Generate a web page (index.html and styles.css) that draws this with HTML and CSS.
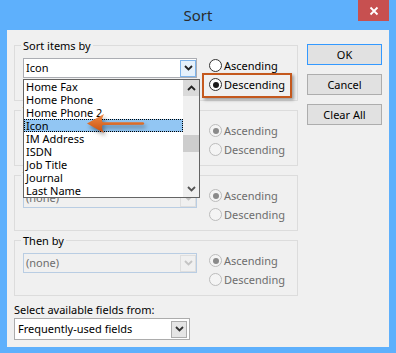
FILE: index.html
```html
<!DOCTYPE html>
<html lang="en">
<head>
  <meta charset="UTF-8" />
  <title>Sort</title>
  <link rel="stylesheet" href="styles.css">
</head>
<body>
  <div class="window">
    <!-- Title bar -->
    <header class="titlebar">
      <span></span>
      <span class="title">Sort</span>
      <button class="close" aria-label="Close">
        <svg width="10" height="10" viewBox="0 0 10 10"><path d="M1.5 1.5 L8.5 8.5 M8.5 1.5 L1.5 8.5" stroke="#fff" stroke-width="1.8" fill="none"/></svg>
      </button>
    </header>

    <div class="client">
      <div class="fields">
        <fieldset class="group">
          <legend>Sort items by</legend>
          <div class="combo active">
            <span>Icon</span>
            <span class="combo-btn"><svg width="9" height="6" viewBox="0 0 9 6"><path d="M1 1 L4.5 4.5 L8 1" stroke="#222" stroke-width="1.8" fill="none"/></svg></span>
          </div>
          <div class="order">
            <label class="radio"><span class="dot"></span>Ascending</label>
            <label class="radio checked marked"><span class="dot"></span>Descending</label>
          </div>
        </fieldset>

        <fieldset class="group off">
          <legend>Then by</legend>
          <div class="combo disabled">
            <span>(none)</span>
            <span class="combo-btn"><svg width="9" height="6" viewBox="0 0 9 6"><path d="M1 1 L4.5 4.5 L8 1" stroke="#c4c4c4" stroke-width="1.8" fill="none"/></svg></span>
          </div>
          <div class="order">
            <label class="radio checked"><span class="dot"></span>Ascending</label>
            <label class="radio"><span class="dot"></span>Descending</label>
          </div>
        </fieldset>

        <fieldset class="group off">
          <legend>Then by</legend>
          <div class="combo disabled">
            <span>(none)</span>
            <span class="combo-btn"><svg width="9" height="6" viewBox="0 0 9 6"><path d="M1 1 L4.5 4.5 L8 1" stroke="#c4c4c4" stroke-width="1.8" fill="none"/></svg></span>
          </div>
          <div class="order">
            <label class="radio checked"><span class="dot"></span>Ascending</label>
            <label class="radio"><span class="dot"></span>Descending</label>
          </div>
        </fieldset>

        <fieldset class="group off">
          <legend>Then by</legend>
          <div class="combo disabled">
            <span>(none)</span>
            <span class="combo-btn"><svg width="9" height="6" viewBox="0 0 9 6"><path d="M1 1 L4.5 4.5 L8 1" stroke="#c4c4c4" stroke-width="1.8" fill="none"/></svg></span>
          </div>
          <div class="order">
            <label class="radio checked"><span class="dot"></span>Ascending</label>
            <label class="radio"><span class="dot"></span>Descending</label>
          </div>
        </fieldset>

        <div class="source-label">Select available fields from:</div>
        <div class="combo source">
          <span>Frequently-used fields</span>
          <span class="combo-btn"><svg width="9" height="6" viewBox="0 0 9 6"><path d="M1 1 L4.5 4.5 L8 1" stroke="#333" stroke-width="1.8" fill="none"/></svg></span>
        </div>

        <!-- open dropdown of the first combo -->
        <div class="dropdown">
          <ul class="options">
            <li>Home Fax</li>
            <li>Home Phone</li>
            <li>Home Phone 2</li>
            <li class="selected">Icon</li>
            <li>IM Address</li>
            <li>ISDN</li>
            <li>Job Title</li>
            <li>Journal</li>
            <li>Last Name</li>
          </ul>
          <div class="scrollbar">
            <span class="scroll-btn hover"><svg width="9" height="6" viewBox="0 0 9 6"><path d="M1 5 L4.5 1.5 L8 5" stroke="#222" stroke-width="1.8" fill="none"/></svg></span>
            <span class="thumb"></span>
            <span class="scroll-btn"><svg width="9" height="6" viewBox="0 0 9 6"><path d="M1 1 L4.5 4.5 L8 1" stroke="#555" stroke-width="1.8" fill="none"/></svg></span>
          </div>
        </div>

        <svg class="pointer" width="62" height="26" viewBox="0 0 62 26">
          <defs>
            <linearGradient id="orange" x1="0" y1="0" x2="0" y2="1">
              <stop offset="0" stop-color="#f08a45"/>
              <stop offset="1" stop-color="#c9500f"/>
            </linearGradient>
          </defs>
          <path d="M1 11.5 L18 2 Q14.5 9 17 10.2 L57 10.3 Q59.5 11.5 57 12.8 L17 13 Q14.5 14.5 18 21 Z" fill="url(#orange)"/>
        </svg>
      </div>

      <div class="actions">
        <button class="btn default">OK</button>
        <button class="btn">Cancel</button>
        <button class="btn">Clear All</button>
      </div>
    </div>
  </div>
</body>
</html>
```

FILE: styles.css
```css
body {
  margin: 0;
  background: #5eb0fc;
  font-family: "Noto Sans", "Liberation Sans", sans-serif;
  font-size: 11px;
  color: #000;
}

.window {
  width: 396px;
  height: 353px;
}

/* title bar */
.titlebar {
  height: 30px;
  display: grid;
  grid-template-columns: 1fr auto 1fr;
  padding-right: 7px;
  padding-left: 7px;
}

.title {
  font-size: 15px;
  line-height: 30px;
  color: #2b2b2b;
}

.close {
  justify-self: end;
  width: 31px;
  height: 21px;
  padding: 0;
  border: none;
  background: #c75050;
  display: flex;
  align-items: center;
  justify-content: center;
}

/* client area */
.client {
  margin: 0 7px;
  height: 317px;
  box-sizing: border-box;
  padding: 8px 7px 0;
  background: #f0f0f0;
  display: flex;
  gap: 9px;
}

.fields {
  width: 284px;
  position: relative;
}

.group {
  box-sizing: border-box;
  height: 63px;
  margin: 0 0 2px;
  padding: 0 0 0 8px;
  border: 1px solid #dcdcdc;
  min-width: 0;
  display: flex;
  align-items: flex-start;
}

legend {
  padding: 0 2px;
  margin-left: -2px;
  line-height: 15px;
}

.combo {
  box-sizing: border-box;
  width: 174px;
  height: 20px;
  margin-top: 5px;
  padding: 0 0 0 2px;
  border: 1px solid #abadb3;
  background: #fff;
  display: flex;
  align-items: center;
  justify-content: space-between;
  line-height: 16px;
}

.combo-btn {
  box-sizing: border-box;
  width: 16px;
  height: 17px;
  border: 1px solid transparent;
  display: flex;
  align-items: center;
  justify-content: center;
}

.combo.active .combo-btn {
  background: #e5f1fb;
  border-color: #7eb4ea;
}

.combo.disabled {
  background: #f0f0f0;
  border-color: #b9cde3;
  color: #6d6d6d;
}

.combo.disabled .combo-btn { border-color: #dedede; }

.order {
  margin: 3px 0 0 12px;
  display: flex;
  flex-direction: column;
}

.radio {
  height: 19px;
  display: flex;
  align-items: center;
  gap: 2px;
  position: relative;
  white-space: nowrap;
}

.dot {
  box-sizing: border-box;
  width: 13px;
  height: 13px;
  border: 1px solid #333;
  border-radius: 50%;
  background: #fff;
  display: flex;
  align-items: center;
  justify-content: center;
}

.radio.checked .dot::before {
  content: "";
  width: 6px;
  height: 6px;
  border-radius: 50%;
  background: #1a1a1a;
}

.off .radio { color: #6d6d6d; }
.off .dot { border-color: #bcbcbc; background: #f4f4f4; }
.off .radio.checked .dot::before { background: #8a8a8a; }

.marked::after {
  content: "";
  position: absolute;
  left: -7px;
  top: -2px;
  width: 90px;
  height: 25px;
  box-sizing: border-box;
  border: 2px solid #c4581d;
  box-shadow: 2px 2px 3px rgba(0, 0, 0, 0.35);
}

.source-label {
  margin-top: 6px;
  line-height: 15px;
}

.combo.source {
  width: 176px;
  height: 22px;
  margin-top: 1px;
  padding: 0 2px 0 3px;
  border-color: #acacac;
}

.combo.source .combo-btn {
  background: #e5e5e5;
  border-color: #acacac;
}

/* open dropdown list */
.dropdown {
  position: absolute;
  left: 9px;
  top: 41px;
  width: 177px;
  box-sizing: border-box;
  border: 1px solid #646464;
  background: #fff;
  display: flex;
}

.options {
  flex: 1;
  margin: 0;
  padding: 0;
  list-style: none;
}

.options li {
  height: 13px;
  line-height: 13px;
  padding-left: 2px;
  white-space: nowrap;
}

.options li.selected {
  background: #92c6f3;
  outline: 1px dotted #000;
  outline-offset: -1px;
}

.scrollbar {
  width: 16px;
  background: #f0f0f0;
  display: flex;
  flex-direction: column;
}

.scroll-btn {
  height: 16px;
  display: flex;
  align-items: center;
  justify-content: center;
}

.scroll-btn.hover { background: #dadada; }

.thumb {
  height: 17px;
  margin: 39px 0 auto;
  background: #cdcdcd;
}

.pointer {
  position: absolute;
  left: 72px;
  top: 74px;
  filter: drop-shadow(2px 3px 2px rgba(0, 0, 0, 0.4));
}

/* buttons */
.actions {
  padding-top: 6px;
  display: flex;
  flex-direction: column;
  gap: 9px;
}

.btn {
  width: 75px;
  height: 21px;
  box-sizing: border-box;
  padding: 0;
  border: 1px solid #adadad;
  background: #e1e1e1;
  font: inherit;
  line-height: 19px;
  color: #000;
}

.btn.default { border-color: #3399ff; }
```
